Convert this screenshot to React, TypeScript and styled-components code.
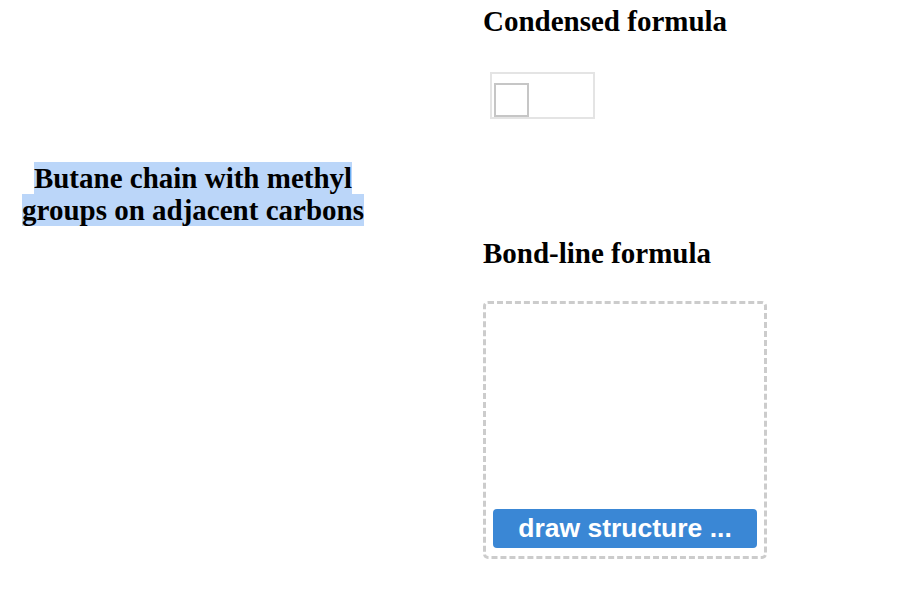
import styled, { createGlobalStyle } from 'styled-components';

const GlobalStyle = createGlobalStyle`
    body {
        margin: 0;
        background: #ffffff;
        font-family: "Liberation Serif", "Times New Roman", serif;
    }
`

const Page = styled.div`
    display: grid;
    grid-template-columns: 386px 1fr;
    width: 906px;
    height: 592px;
`

const DescriptionCell = styled.div`
    padding-top: 163px;
    text-align: center;
`

const Description = styled.span`
    font-size: 29px;
    font-weight: bold;
    line-height: 31.5px;
    color: #000;
    background: #bbd6f9;
`

const FormulaColumn = styled.div`
    display: flex;
    flex-direction: column;
    padding-left: 97px;
    padding-top: 4px;
`

const FormulaTitle = styled.h3<{ $gap: number }>`
    margin: 0 0 ${p => p.$gap}px 0;
    font-size: 29px;
    font-weight: bold;
    line-height: 34px;
    color: #000;
`

const CondensedPreview = styled.div`
    width: 105px;
    height: 47px;
    margin: 2px 0 117px 7px;
    box-sizing: border-box;
    border: 2px solid #e4e4e4;
    display: flex;
    align-items: flex-end;
    padding-left: 2px;
    filter: blur(0.4px);
`

const PreviewBox = styled.div`
    width: 35px;
    height: 34px;
    box-sizing: border-box;
    border: 2px solid #c6c6c6;
`

const SketchArea = styled.div`
    width: 284px;
    height: 258px;
    box-sizing: border-box;
    border: 3px dashed #cccccc;
    border-radius: 5px;
    display: flex;
    flex-direction: column;
    justify-content: flex-end;
    align-items: center;
    padding-bottom: 8px;
`

const DrawButton = styled.button`
    width: 264px;
    height: 39px;
    border: none;
    border-radius: 4px;
    background: #3a87d5;
    color: #ffffff;
    font-family: "Liberation Sans", Arial, sans-serif;
    font-size: 26.5px;
    font-weight: bold;
    cursor: pointer;
    padding: 0;
`

function App() {
    return (
        <>
            <GlobalStyle />
            <Page>
                <DescriptionCell>
                    <Description>Butane chain with methyl groups on adjacent carbons</Description>
                </DescriptionCell>
                <FormulaColumn>
                    <FormulaTitle $gap={32}>Condensed formula</FormulaTitle>
                    <CondensedPreview>
                        <PreviewBox />
                    </CondensedPreview>
                    <FormulaTitle $gap={31}>Bond-line formula</FormulaTitle>
                    <SketchArea>
                        <DrawButton>draw structure ...</DrawButton>
                    </SketchArea>
                </FormulaColumn>
            </Page>
        </>
    )
}

export default App
